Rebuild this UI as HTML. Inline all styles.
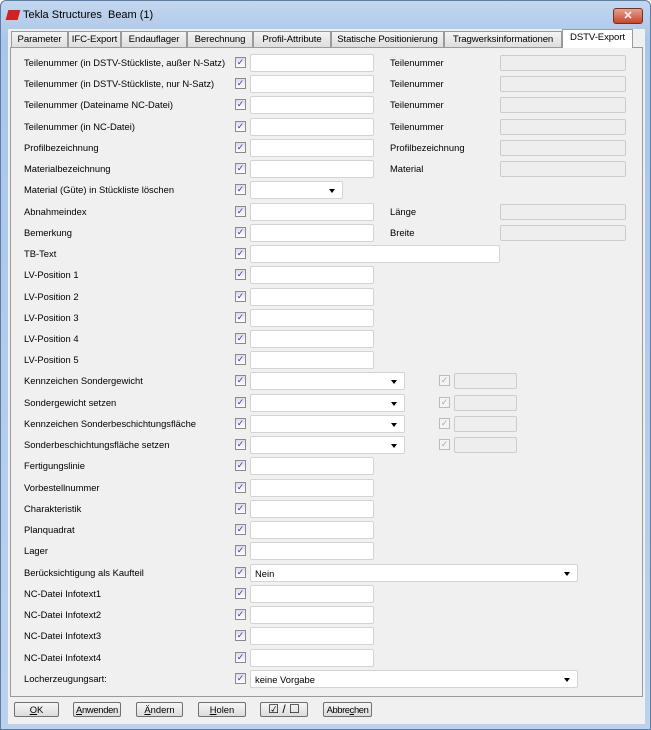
<!DOCTYPE html>
<html><head><meta charset="utf-8"><style>
*{box-sizing:border-box;margin:0;padding:0}
body{width:651px;height:730px;overflow:hidden;font-family:"Liberation Sans",sans-serif;font-size:9.4px;color:#000;background:#fff}
.win{position:absolute;left:0;top:0;width:651px;height:730px;background:linear-gradient(#c3d7ee,#a9c6e8 40px,#bcd2ec);border:1px solid #5a7ea8;border-radius:6px 6px 0 0}
.title{position:absolute;left:22px;top:8px;font-size:11px;color:#000}
.logo{position:absolute;left:6px;top:9px;width:12px;height:10px;background:#d42020;transform:skewX(-15deg)}
.close{position:absolute;left:612px;top:7px;width:30px;height:16px;border-radius:3px;background:linear-gradient(#e8a090,#c8452c);border:1px solid #7a3020;color:#fff;font-weight:bold;text-align:center;font-size:11px;line-height:14px}
.client{position:absolute;left:7px;top:28px;width:637px;height:695px;background:#f0f0f0}
.tab{position:absolute;top:2px;height:17px;border:1px solid #9a9a9a;border-bottom:none;background:linear-gradient(#f4f4f4,#dcdcdc);font-size:9.6px;letter-spacing:-0.1px;line-height:15px;text-align:center;white-space:nowrap;overflow:hidden}
.tab.a{top:0;height:19px;background:#fff;z-index:2}
.panel{position:absolute;left:2px;top:18px;width:633px;height:650px;background:#f0f0f0;border:1px solid #9a9a9a}
.r{position:absolute;left:0;width:630px;height:18px}
.l{position:absolute;left:13px;top:3px;white-space:nowrap}
.l2{position:absolute;left:379px;top:3px}
.cb{position:absolute;left:224px;top:3px;width:11px;height:11px;border:1px solid #8a8a8a;background:linear-gradient(#dde,#fff);color:#3040a0;font-size:9px;line-height:9px;text-align:center}
.cb.d{left:428px;color:#aaa;border-color:#bbb;background:#f4f4f4}
.i{position:absolute;left:239px;top:0;width:124px;height:18px;background:#fff;border:1px solid #d4d4d4;border-radius:2px}
.g{position:absolute;left:489px;top:1px;width:126px;height:16px;background:#eee;border:1px solid #ccc;border-radius:2px}
.s{position:absolute;left:443px;top:1px;width:63px;height:16px;background:#eee;border:1px solid #ccc;border-radius:2px}
.dd::after{content:"";position:absolute;right:7px;top:7px;border:3px solid transparent;border-top:4px solid #000}
.v{position:absolute;left:4px;top:3px}
.btn{position:absolute;top:673px;height:15px;border:1px solid #707070;border-radius:2px;background:linear-gradient(#f6f6f6,#dcdcdc);font-size:9.4px;text-align:center;line-height:13px;white-space:nowrap;overflow:hidden}
</style></head><body>
<div class="win">
<div class="logo"></div>
<div class="title">Tekla Structures&nbsp; Beam (1)</div>
<div class="close">✕</div>
<div class="client">
<div class="tab" style="left:3px;width:57px">Parameter</div>
<div class="tab" style="left:60px;width:53px">IFC-Export</div>
<div class="tab" style="left:113px;width:66px">Endauflager</div>
<div class="tab" style="left:179px;width:66px">Berechnung</div>
<div class="tab" style="left:245px;width:78px">Profil-Attribute</div>
<div class="tab" style="left:323px;width:113px">Statische Positionierung</div>
<div class="tab" style="left:436px;width:118px">Tragwerksinformationen</div>
<div class="tab a" style="left:554px;width:71px">DSTV-Export</div>
<div class="panel">
<div class="r" style="top:6px"><span class="l">Teilenummer (in DSTV-Stückliste, außer N-Satz)</span><span class="cb">✓</span><span class="i"></span><span class="l2">Teilenummer</span><span class="g"></span></div>
<div class="r" style="top:27px"><span class="l">Teilenummer (in DSTV-Stückliste, nur N-Satz)</span><span class="cb">✓</span><span class="i"></span><span class="l2">Teilenummer</span><span class="g"></span></div>
<div class="r" style="top:48px"><span class="l">Teilenummer (Dateiname NC-Datei)</span><span class="cb">✓</span><span class="i"></span><span class="l2">Teilenummer</span><span class="g"></span></div>
<div class="r" style="top:70px"><span class="l">Teilenummer (in NC-Datei)</span><span class="cb">✓</span><span class="i"></span><span class="l2">Teilenummer</span><span class="g"></span></div>
<div class="r" style="top:91px"><span class="l">Profilbezeichnung</span><span class="cb">✓</span><span class="i"></span><span class="l2">Profilbezeichnung</span><span class="g"></span></div>
<div class="r" style="top:112px"><span class="l">Materialbezeichnung</span><span class="cb">✓</span><span class="i"></span><span class="l2">Material</span><span class="g"></span></div>
<div class="r" style="top:133px"><span class="l">Material (Güte) in Stückliste löschen</span><span class="cb">✓</span><span class="i dd" style="width:93px"></span></div>
<div class="r" style="top:155px"><span class="l">Abnahmeindex</span><span class="cb">✓</span><span class="i"></span><span class="l2">Länge</span><span class="g"></span></div>
<div class="r" style="top:176px"><span class="l">Bemerkung</span><span class="cb">✓</span><span class="i"></span><span class="l2">Breite</span><span class="g"></span></div>
<div class="r" style="top:197px"><span class="l">TB-Text</span><span class="cb">✓</span><span class="i" style="width:250px"></span></div>
<div class="r" style="top:218px"><span class="l">LV-Position 1</span><span class="cb">✓</span><span class="i"></span></div>
<div class="r" style="top:240px"><span class="l">LV-Position 2</span><span class="cb">✓</span><span class="i"></span></div>
<div class="r" style="top:261px"><span class="l">LV-Position 3</span><span class="cb">✓</span><span class="i"></span></div>
<div class="r" style="top:282px"><span class="l">LV-Position 4</span><span class="cb">✓</span><span class="i"></span></div>
<div class="r" style="top:303px"><span class="l">LV-Position 5</span><span class="cb">✓</span><span class="i"></span></div>
<div class="r" style="top:324px"><span class="l">Kennzeichen Sondergewicht</span><span class="cb">✓</span><span class="i dd" style="width:155px"></span><span class="cb d">✓</span><span class="s"></span></div>
<div class="r" style="top:346px"><span class="l">Sondergewicht setzen</span><span class="cb">✓</span><span class="i dd" style="width:155px"></span><span class="cb d">✓</span><span class="s"></span></div>
<div class="r" style="top:367px"><span class="l">Kennzeichen Sonderbeschichtungsfläche</span><span class="cb">✓</span><span class="i dd" style="width:155px"></span><span class="cb d">✓</span><span class="s"></span></div>
<div class="r" style="top:388px"><span class="l">Sonderbeschichtungsfläche setzen</span><span class="cb">✓</span><span class="i dd" style="width:155px"></span><span class="cb d">✓</span><span class="s"></span></div>
<div class="r" style="top:409px"><span class="l">Fertigungslinie</span><span class="cb">✓</span><span class="i"></span></div>
<div class="r" style="top:431px"><span class="l">Vorbestellnummer</span><span class="cb">✓</span><span class="i"></span></div>
<div class="r" style="top:452px"><span class="l">Charakteristik</span><span class="cb">✓</span><span class="i"></span></div>
<div class="r" style="top:473px"><span class="l">Planquadrat</span><span class="cb">✓</span><span class="i"></span></div>
<div class="r" style="top:494px"><span class="l">Lager</span><span class="cb">✓</span><span class="i"></span></div>
<div class="r" style="top:516px"><span class="l">Berücksichtigung als Kaufteil</span><span class="cb">✓</span><span class="i dd" style="width:328px"><span class="v">Nein</span></span></div>
<div class="r" style="top:537px"><span class="l">NC-Datei Infotext1</span><span class="cb">✓</span><span class="i"></span></div>
<div class="r" style="top:558px"><span class="l">NC-Datei Infotext2</span><span class="cb">✓</span><span class="i"></span></div>
<div class="r" style="top:579px"><span class="l">NC-Datei Infotext3</span><span class="cb">✓</span><span class="i"></span></div>
<div class="r" style="top:601px"><span class="l">NC-Datei Infotext4</span><span class="cb">✓</span><span class="i"></span></div>
<div class="r" style="top:622px"><span class="l">Locherzeugungsart:</span><span class="cb">✓</span><span class="i dd" style="width:328px"><span class="v">keine Vorgabe</span></span></div>
</div>
<div class="btn" style="left:6px;width:45px"><u>O</u>K</div>
<div class="btn" style="left:65px;width:48px;letter-spacing:-0.3px"><u>A</u>nwenden</div>
<div class="btn" style="left:128px;width:47px"><u>Ä</u>ndern</div>
<div class="btn" style="left:190px;width:48px"><u>H</u>olen</div>
<div class="btn" style="left:252px;width:48px;font-size:12px">☑ / ☐</div>
<div class="btn" style="left:315px;width:49px;letter-spacing:-0.4px">Abbre<u>c</u>hen</div>
</div>
</div>
</body></html>
